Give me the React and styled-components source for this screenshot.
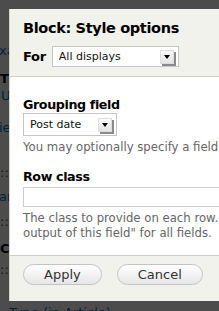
import React from 'react';
import styled, { createGlobalStyle } from 'styled-components';

const GlobalStyle = createGlobalStyle`
  html, body {
    margin: 0;
    padding: 0;
    width: 219px;
    height: 311px;
    overflow: hidden;
    background: #4b4b4b;
    font-family: "DejaVu Sans", Verdana, sans-serif;
  }
`;

const bgRows = [
  { h: 44, text: '', kind: 'plain', indent: 0 },
  { h: 14, text: 'xa', kind: 'link', indent: -1 },
  { h: 28, text: 'T', kind: 'bold', indent: 0 },
  { h: 17, text: 'U', kind: 'link', indent: 1 },
  { h: 32, text: 'ie', kind: 'link', indent: -1 },
  { h: 45, text: '::', kind: 'plain', indent: 0 },
  { h: 24, text: 'ar', kind: 'link', indent: -1 },
  { h: 25, text: '::', kind: 'plain', indent: 0 },
  { h: 27, text: 'Cl', kind: 'bold', indent: 0 },
  { h: 21, text: '::', kind: 'plain', indent: 0 },
  { h: 43, text: 'Type (in Article)', kind: 'link', indent: 9 },
];

const App = () => {
  return (
    <>
      <GlobalStyle />
      <Page>
        {bgRows.map((r, i) => (
          <BgRow key={i} $h={r.h} $kind={r.kind} $indent={r.indent}>{r.text}</BgRow>
        ))}
      </Page>
      <Overlay />
      <Dialog>
        <Header>
          <Title>Block: Style options</Title>
          <ForRow>
            <ForLabel>For</ForLabel>
            <FakeSelect $width={127} $height={21}>
              <SelectText>All displays</SelectText>
              <ArrowBox><Triangle /></ArrowBox>
            </FakeSelect>
          </ForRow>
        </Header>
        <Content>
          <Label>Grouping field</Label>
          <FakeSelect $width={94} $height={23}>
            <SelectText>Post date</SelectText>
            <ArrowBox><Triangle /></ArrowBox>
          </FakeSelect>
          <Description>
            You may optionally specify a field by which to group the records. Leave blank to not group.
          </Description>
          <Label $space={14}>Row class</Label>
          <TextInput type="text" />
          <Description>
            The class to provide on each row. You may use field tokens as per the "Replacement patterns" used in "Rewrite the
            <br />
            output of this field" for all fields.
          </Description>
        </Content>
        <Footer>
          <Button>Apply</Button>
          <Button>Cancel</Button>
        </Footer>
      </Dialog>
    </>
  );
};

const Page = styled.div`
  background: #fff;
  width: 219px;
  height: 311px;
  overflow: hidden;
  display: flex;
  flex-direction: column;
`;

const BgRow = styled.div`
  flex: none;
  height: ${(p) => p.$h}px;
  display: flex;
  align-items: flex-end;
  padding-left: ${(p) => Math.max(p.$indent, 0)}px;
  margin-left: ${(p) => Math.min(p.$indent, 0)}px;
  font-size: 13px;
  line-height: 14px;
  white-space: nowrap;
  font-weight: ${(p) => (p.$kind === 'bold' ? 'bold' : 'normal')};
  color: ${(p) => (p.$kind === 'link' ? '#0074bd' : p.$kind === 'bold' ? '#000' : '#555')};
`;

const Overlay = styled.div`
  position: absolute;
  inset: 0;
  background: rgba(0, 0, 0, 0.7);
`;

const Dialog = styled.div`
  position: absolute;
  left: 9px;
  top: 9px;
  width: 640px;
  background: #fff;
  border-left: 1px solid #d4d4cc;
  box-sizing: border-box;
  color: #000;
`;

const Header = styled.div`
  background: #f2f2ec;
  padding: 10px 14px 9px 13px;
  border-bottom: 1px solid #cfcfc8;
`;

const Title = styled.h1`
  margin: 0 0 9px;
  font-size: 14.5px;
  letter-spacing: -0.35px;
  line-height: 18px;
  font-weight: bold;
`;

const ForRow = styled.div`
  display: flex;
  align-items: center;
  gap: 6px;
`;

const ForLabel = styled.span`
  font-size: 13px;
  letter-spacing: -0.3px;
  font-weight: bold;
`;

const FakeSelect = styled.div`
  width: ${(p) => p.$width}px;
  height: ${(p) => p.$height}px;
  box-sizing: border-box;
  border: 1px solid #c6c6c6;
  background: #fff;
  display: flex;
  align-items: center;
  justify-content: space-between;
  padding: 0 2px 0 6px;
`;

const SelectText = styled.span`
  font-size: 11px;
  color: #111;
`;

const ArrowBox = styled.span`
  width: 12px;
  height: 12px;
  background: linear-gradient(#fafafa, #e4e4e4);
  border: 1px solid #ddd;
  box-shadow: 2px 2px 0 #8a8a8a;
  display: flex;
  align-items: center;
  justify-content: center;
  margin-right: 2px;
`;

const Triangle = styled.span`
  width: 0;
  height: 0;
  border-left: 3px solid transparent;
  border-right: 3px solid transparent;
  border-top: 4px solid #000;
`;

const Content = styled.div`
  padding: 20px 14px 14px 13px;
`;

const Label = styled.div`
  font-size: 12.7px;
  letter-spacing: -0.4px;
  line-height: 16px;
  font-weight: bold;
  margin-top: ${(p) => p.$space || 0}px;
  margin-bottom: 0;
`;

const TextInput = styled.input`
  display: block;
  margin-top: 2px;
  width: 400px;
  height: 20px;
  box-sizing: border-box;
  border: 1px solid #ccc;
  padding: 0 4px;
`;

const Description = styled.div`
  margin-top: 4px;
  font-size: 11.7px;
  line-height: 15px;
  color: #666;
  white-space: nowrap;
`;

const Footer = styled.div`
  background: #f2f2ec;
  border-top: 1px solid #cfcfc8;
  padding: 8px 13px 16px;
  display: flex;
  gap: 15px;
`;

const Button = styled.button`
  height: 21px;
  padding: 0 20px;
  border-radius: 11px;
  border: 1px solid #c4c4c4;
  background: linear-gradient(#ffffff, #e6e6e6);
  font-family: "DejaVu Sans", Verdana, sans-serif;
  font-size: 13px;
  color: #333;
  cursor: pointer;
`;

export default App;
